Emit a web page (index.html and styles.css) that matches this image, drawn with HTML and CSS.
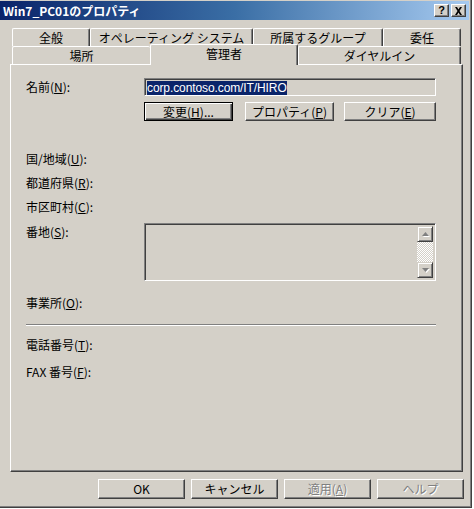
FILE: index.html
```html
<!DOCTYPE html>
<html lang="ja">
<head>
<meta charset="utf-8">
<title>Win7_PC01のプロパティ</title>
<link rel="stylesheet" href="styles.css">
</head>
<body>
<div class="window">
  <div class="titlebar">
    <span class="title">Win7_PC01のプロパティ</span>
    <div class="tbtns">
      <span class="tbtn help">?</span>
      <span class="tbtn close"><svg width="9" height="8" viewBox="0 0 9 8"><path d="M1 0h2l1.5 2.5L6 0h2L5.5 4 8 8H6L4.5 5.5 3 8H1l2.5-4z" fill="#000"/></svg></span>
    </div>
  </div>

  <div class="tabs">
    <div class="tabrow">
      <div class="tab t-gen">全般</div>
      <div class="tab t-os">オペレーティング システム</div>
      <div class="tab t-grp">所属するグループ</div>
      <div class="tab t-del">委任</div>
    </div>
    <div class="tabrow row2">
      <div class="tab t-loc">場所</div>
      <div class="tab t-mgr active">管理者</div>
      <div class="tab t-dial">ダイヤルイン</div>
    </div>
  </div>

  <div class="panel">
    <div class="row name-row">
      <span class="label">名前(<u>N</u>):</span>
      <div class="field"><span class="sel">corp.contoso.com/IT/HIRO</span></div>
    </div>
    <div class="btnrow">
      <button class="btn default b1">変更(<u>H</u>)...</button>
      <button class="btn b2">プロパティ(<u>P</u>)</button>
      <button class="btn b3">クリア(<u>E</u>)</button>
    </div>

    <div class="line first">国/地域(<u>U</u>):</div>
    <div class="line">都道府県(<u>R</u>):</div>
    <div class="line">市区町村(<u>C</u>):</div>

    <div class="row street-row">
      <span class="label top">番地(<u>S</u>):</span>
      <div class="textarea">
        <div class="scrollbar">
          <span class="sbtn"><svg width="7" height="4" viewBox="0 0 7 4"><path d="M3.5 0L7 4H0z" fill="#808080"/></svg></span>
          <span class="track"></span>
          <span class="sbtn"><svg width="7" height="4" viewBox="0 0 7 4"><path d="M0 0h7L3.5 4z" fill="#808080"/></svg></span>
        </div>
      </div>
    </div>

    <div class="line office">事業所(<u>O</u>):</div>
    <div class="separator"></div>
    <div class="line phone">電話番号(<u>T</u>):</div>
    <div class="line fax">FAX 番号(<u>F</u>):</div>
  </div>

  <div class="footer">
    <button class="btn fbtn">OK</button>
    <button class="btn fbtn">キャンセル</button>
    <button class="btn fbtn disabled">適用(<u>A</u>)</button>
    <button class="btn fbtn disabled">ヘルプ</button>
  </div>
</div>
</body>
</html>
```
FILE: styles.css
```css
* { box-sizing: border-box; }
html, body { margin: 0; padding: 0; background: #fff; }
body {
  font-family: "Noto Sans CJK JP", "Liberation Sans", sans-serif;
  font-size: 12px;
  color: #000;
}
.window {
  width: 472px;
  height: 508px;
  background: #D4D0C8;
  border-right: 1px solid #404040;
  border-bottom: 1px solid #404040;
  box-shadow: inset -1px -1px 0 #808080;
  overflow: hidden;
}
.titlebar {
  height: 19px;
  margin: 1px 2px 0 0;
  padding: 0 3px 0 3px;
  background: linear-gradient(to right, #0A246A, #3A6EA5 50%, #A6CAF0);
  display: flex;
  align-items: center;
  justify-content: space-between;
  color: #fff;
  font-weight: bold;
  font-size: 12px;
  line-height: 14px;
}
.tbtns { display: flex; gap: 1px; }
.tbtn {
  width: 15px;
  height: 13px;
  background: #D4D0C8;
  border: 1px solid;
  border-color: #fff #404040 #404040 #fff;
  box-shadow: inset -1px -1px 0 #808080;
  display: flex;
  align-items: center;
  justify-content: center;
  color: #000;
  font-family: "Liberation Sans", sans-serif;
  font-weight: bold;
  font-size: 11px;
  line-height: 11px;
}
.tbtn.help { margin-right: 1px; }

.tabs { margin-top: 8px; padding-left: 12px; }
.tabrow { display: flex; height: 18px; align-items: flex-end; }
.tab {
  height: 18px;
  border-top: 1px solid #fff;
  border-left: 1px solid #fff;
  border-right: 1px solid #404040;
  box-shadow: inset -1px 0 0 #808080;
  border-radius: 2px 2px 0 0;
  display: flex;
  align-items: center;
  justify-content: center;
  line-height: 14px;
  background: #D4D0C8;
}
.t-gen { width: 78px; }
.t-os { width: 163px; }
.t-grp { width: 130px; }
.t-del { width: 78px; }
.t-loc { width: 138px; border-right: none; box-shadow: none; }
.t-mgr { width: 148px; }
.t-dial { width: 163px; }
.tab.active {
  height: 21px;
  margin-bottom: -1px;
  position: relative;
  z-index: 1;
  padding-bottom: 3px;
}

.panel {
  margin-left: 10px;
  width: 453px;
  height: 408px;
  border: 1px solid;
  border-color: #fff #404040 #404040 #fff;
  box-shadow: inset -1px -1px 0 #808080;
  padding: 13px 0 0 15px;
}
.row { display: flex; }
.label { width: 118px; line-height: 14px; }
.name-row { align-items: center; }
.field {
  width: 292px;
  height: 18px;
  border: 1px solid;
  border-color: #808080 #fff #fff #808080;
  box-shadow: inset 1px 1px 0 #404040, inset -1px -1px 0 #D4D0C8;
  padding: 1px 0 0 2px;
  line-height: 14px;
  display: flex;
  align-items: center;
}
.sel {
  background: #0A246A;
  color: #fff;
  line-height: 14px;
  font-family: "Liberation Sans", sans-serif;
  font-size: 12px;
  letter-spacing: -0.1px;
}
.btnrow {
  display: flex;
  margin: 6px 0 0 118px;
}
.btn {
  height: 19px;
  background: #D4D0C8;
  border: 1px solid;
  border-color: #fff #404040 #404040 #fff;
  box-shadow: inset -1px -1px 0 #808080;
  font-family: inherit;
  font-size: 12px;
  color: #000;
  padding: 0;
  line-height: 14px;
  display: flex;
  align-items: center;
  justify-content: center;
}
.btn.default {
  border: 1px solid #000;
  box-shadow: inset 1px 1px 0 #fff, inset -1px -1px 0 #404040, inset -2px -2px 0 #808080;
}
.b1 { width: 89px; }
.b2 { width: 89px; margin-left: 12px; }
.b3 { width: 92px; margin-left: 10px; }

.line { height: 14px; line-height: 14px; margin-top: 10px; }
.line.first { margin-top: 31px; }
.street-row { margin-top: 9px; }
.label.top { padding-top: 2px; }
.textarea {
  width: 292px;
  height: 58px;
  border: 1px solid;
  border-color: #808080 #fff #fff #808080;
  box-shadow: inset 1px 1px 0 #404040, inset -1px -1px 0 #D4D0C8;
  padding: 2px 2px 2px 0;
  display: flex;
  justify-content: flex-end;
}
.scrollbar {
  width: 16px;
  display: flex;
  flex-direction: column;
}
.sbtn {
  width: 16px;
  height: 16px;
  background: #D4D0C8;
  border: 1px solid;
  border-color: #D4D0C8 #404040 #404040 #D4D0C8;
  box-shadow: inset 1px 1px 0 #fff, inset -1px -1px 0 #808080;
  display: flex;
  align-items: center;
  justify-content: center;
  flex: none;
}
.sbtn svg { filter: drop-shadow(1px 1px 0 #fff); }
.track {
  flex: 1;
  background: repeating-conic-gradient(#fff 0 25%, #D4D0C8 0 50%) 0 0 / 2px 2px;
}
.line.office { margin-top: 15px; }
.separator {
  width: 410px;
  height: 2px;
  margin-top: 14px;
  border-top: 1px solid #808080;
  border-bottom: 1px solid #fff;
}
.line.phone { margin-top: 12px; }
.line.fax { margin-top: 13px; }

.footer {
  display: flex;
  justify-content: flex-end;
  gap: 6px;
  margin-top: 7px;
  padding-right: 7px;
}
.fbtn { width: 87px; height: 20px; }
.fbtn.disabled { color: #808080; text-shadow: 1px 1px 0 #fff; }
```
